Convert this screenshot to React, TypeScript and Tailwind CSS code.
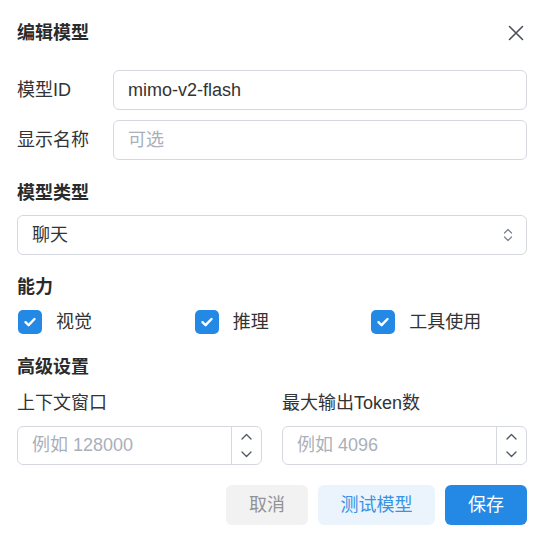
import React from "react";

const font = {
  fontFamily: '"Liberation Sans", "Noto Sans CJK SC", sans-serif',
};

function Check() {
  return (
    <span className="flex h-6 w-6 shrink-0 items-center justify-center rounded-[5px] bg-[#2489e4]">
      <svg width="14" height="14" viewBox="0 0 14 14" fill="none">
        <path d="M2.5 7.2 L5.6 10.2 L11.5 4" stroke="white" strokeWidth="2.4" strokeLinecap="round" strokeLinejoin="round" />
      </svg>
    </span>
  );
}

function Chevron({ up }: { up?: boolean }) {
  return (
    <svg width="11" height="7" viewBox="0 0 11 7" fill="none">
      <path
        d={up ? "M1 6 L5.5 1.5 L10 6" : "M1 1 L5.5 5.5 L10 1"}
        stroke="#4b5563"
        strokeWidth="1.3"
        strokeLinecap="round"
        strokeLinejoin="round"
      />
    </svg>
  );
}

function NumberField({ placeholder }: { placeholder: string }) {
  return (
    <div className="flex h-[39px] overflow-hidden rounded-[6px] border border-[#d5d8de] bg-white">
      <div className="flex flex-1 items-center pl-[14px] text-[18px] text-[#aab0ba]">{placeholder}</div>
      <div className="flex w-[30px] flex-col items-center justify-between border-l border-[#d5d8de] py-[6px]">
        <Chevron up />
        <Chevron />
      </div>
    </div>
  );
}

export default function App() {
  return (
    <div style={font} className="h-[540px] w-[542px] bg-white pl-[17px] pr-[15px] text-[#333333]">
      <div className="flex items-center justify-between pt-[21px]">
        <h2 className="text-[18px] font-bold leading-6 text-[#2b2b2b]">编辑模型</h2>
        <svg width="16" height="16" viewBox="0 0 16 16" fill="none" className="mr-[3px]">
          <path d="M1.5 1.5 L14.5 14.5 M14.5 1.5 L1.5 14.5" stroke="#4b5058" strokeWidth="1.6" strokeLinecap="round" />
        </svg>
      </div>

      <div className="mt-[25px] flex flex-col gap-[10px]">
        <div className="flex items-center">
          <span className="w-[96px] shrink-0 text-[18px] leading-6">模型ID</span>
          <div className="flex h-10 flex-1 items-center rounded-[6px] border border-[#d5d8de] px-[14px] text-[18px] text-[#333333]">
            mimo-v2-flash
          </div>
        </div>
        <div className="flex items-center">
          <span className="w-[96px] shrink-0 text-[18px] leading-6">显示名称</span>
          <div className="flex h-10 flex-1 items-center rounded-[6px] border border-[#d5d8de] px-[14px] text-[18px] text-[#aab0ba]">
            可选
          </div>
        </div>
      </div>

      <h3 className="mt-[21px] text-[18px] font-bold leading-6 text-[#2b2b2b]">模型类型</h3>
      <div className="mt-[10px] flex h-10 items-center justify-between rounded-[6px] border border-[#d5d8de] pl-[14px] pr-[13px] text-[18px]">
        <span>聊天</span>
        <svg width="10" height="14" viewBox="0 0 10 14" fill="none">
          <path d="M1.5 5 L5 1.5 L8.5 5 M1.5 9 L5 12.5 L8.5 9" stroke="#7b818b" strokeWidth="1.2" strokeLinecap="round" strokeLinejoin="round" />
        </svg>
      </div>

      <h3 className="mt-[20px] text-[18px] font-bold leading-6 text-[#2b2b2b]">能力</h3>
      <div className="mt-[11px] grid grid-cols-3 gap-5">
        {["视觉", "推理", "工具使用"].map((t) => (
          <label key={t} className="flex items-center gap-[14px] pl-px text-[18px] leading-6">
            <Check />
            <span>{t}</span>
          </label>
        ))}
      </div>

      <h3 className="mt-[21px] text-[18px] font-bold leading-6 text-[#2b2b2b]">高级设置</h3>
      <div className="mt-[12px] grid grid-cols-2 gap-5">
        <div className="flex flex-col gap-[11px]">
          <span className="text-[18px] leading-6">上下文窗口</span>
          <NumberField placeholder="例如 128000" />
        </div>
        <div className="flex flex-col gap-[11px]">
          <span className="text-[18px] leading-6">最大输出Token数</span>
          <NumberField placeholder="例如 4096" />
        </div>
      </div>

      <div className="mt-[20px] flex justify-end gap-[10px]">
        <button className="h-10 w-[82px] rounded-[6px] bg-[#f2f2f2] text-[18px] text-[#919398]">取消</button>
        <button className="h-10 w-[117px] rounded-[6px] bg-[#ebf4fd] text-[18px] text-[#3a92e2]">测试模型</button>
        <button className="h-10 w-[82px] rounded-[6px] bg-[#2489e4] text-[18px] text-white">保存</button>
      </div>
    </div>
  );
}
